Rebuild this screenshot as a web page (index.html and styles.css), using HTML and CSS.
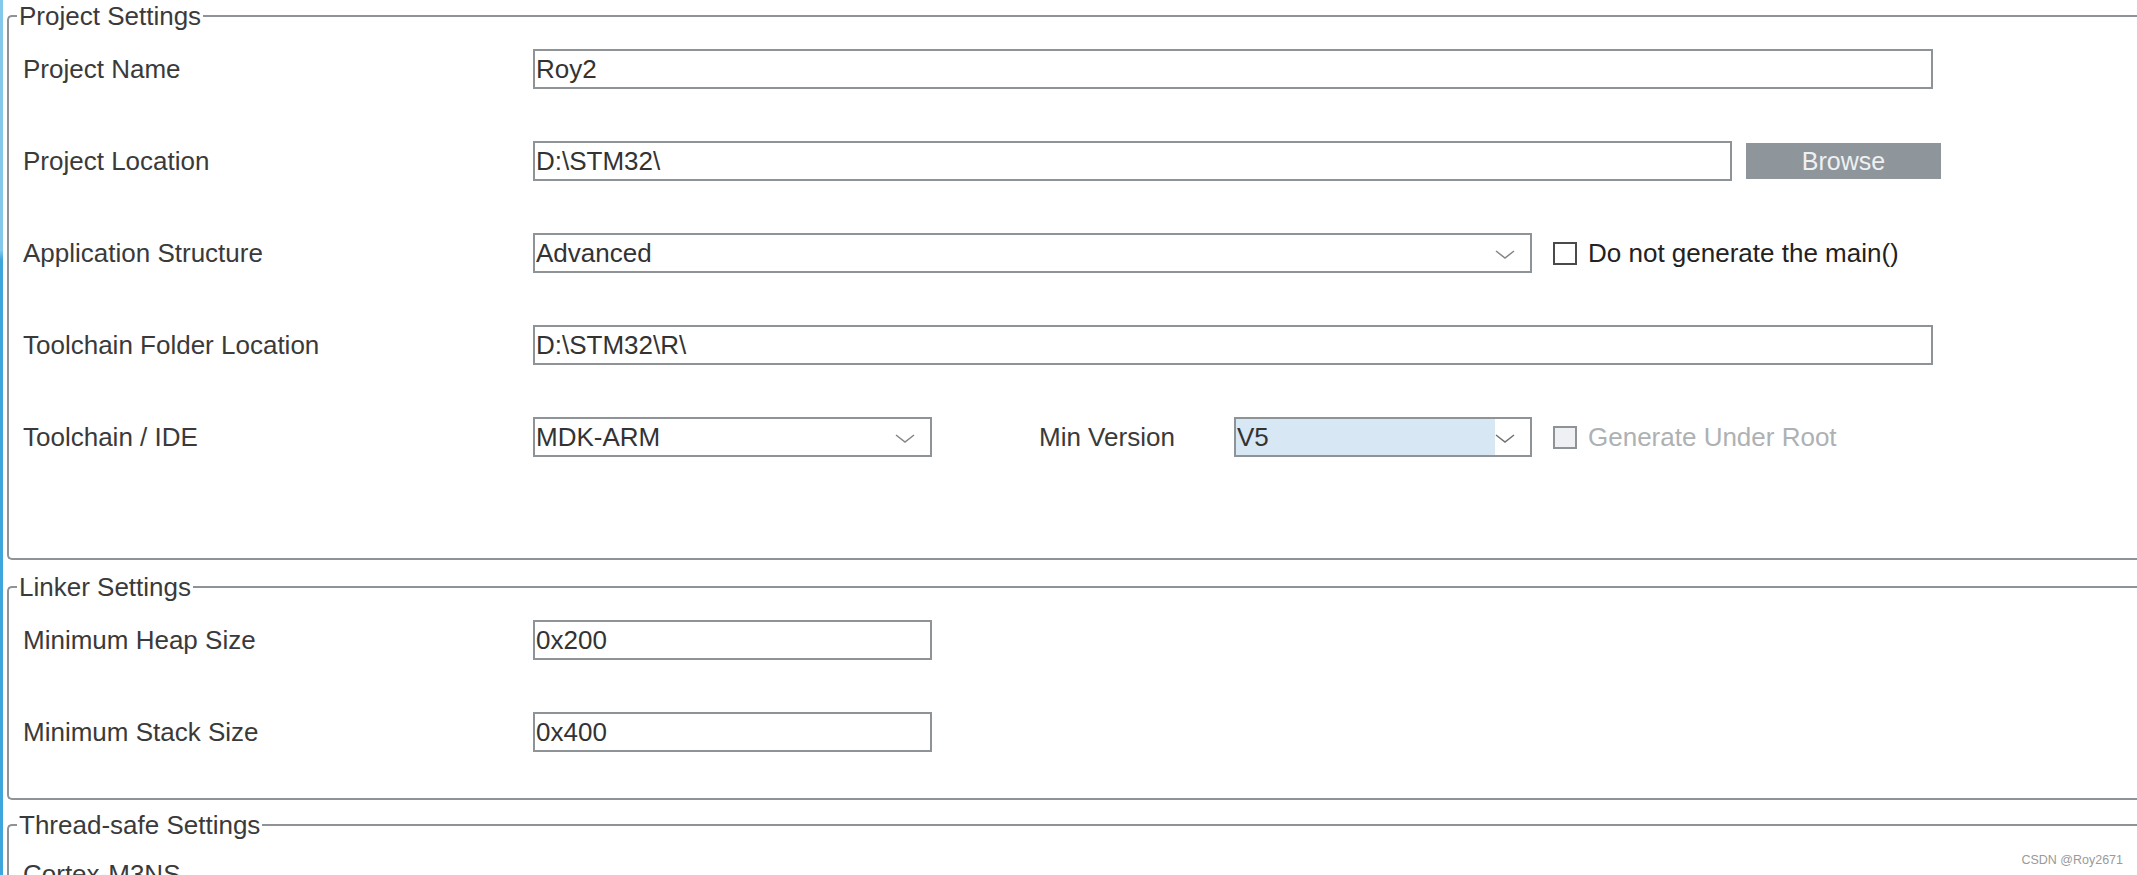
FILE: index.html
```html
<!DOCTYPE html>
<html lang="en">
<head>
<meta charset="utf-8">
<title>Project Settings</title>
<link rel="stylesheet" href="styles.css">
</head>
<body>
<div class="page">
  <div class="strip"></div>
  <div class="content">
    <fieldset class="group group-project">
      <legend>Project Settings</legend>
      <div class="rows">
        <div class="row">
          <div class="label">Project Name</div>
          <div class="field w-full"><span class="val">Roy2</span></div>
        </div>
        <div class="row">
          <div class="label">Project Location</div>
          <div class="field w-loc"><span class="val">D:\STM32\</span></div>
          <div class="button">Browse</div>
        </div>
        <div class="row">
          <div class="label">Application Structure</div>
          <div class="field select w-app"><span class="val">Advanced</span>
            <span class="arrow"><svg width="20" height="9" viewBox="0 0 20 9"><path d="M1 1 L10 8 L19 1" fill="none" stroke="#858585" stroke-width="1.5"/></svg></span>
          </div>
          <div class="check"><span class="box"></span><span class="check-text">Do not generate the main()</span></div>
        </div>
        <div class="row">
          <div class="label">Toolchain Folder Location</div>
          <div class="field w-full"><span class="val">D:\STM32\R\</span></div>
        </div>
        <div class="row">
          <div class="label">Toolchain / IDE</div>
          <div class="field select w-small"><span class="val">MDK-ARM</span>
            <span class="arrow"><svg width="20" height="9" viewBox="0 0 20 9"><path d="M1 1 L10 8 L19 1" fill="none" stroke="#858585" stroke-width="1.5"/></svg></span>
          </div>
          <div class="label label-min">Min Version</div>
          <div class="field select selected w-ver"><span class="val">V5</span>
            <span class="arrow"><svg width="20" height="9" viewBox="0 0 20 9"><path d="M1 1 L10 8 L19 1" fill="none" stroke="#6f6f6f" stroke-width="1.5"/></svg></span>
          </div>
          <div class="check disabled"><span class="box"></span><span class="check-text">Generate Under Root</span></div>
        </div>
      </div>
    </fieldset>

    <fieldset class="group group-linker">
      <legend>Linker Settings</legend>
      <div class="rows">
        <div class="row">
          <div class="label">Minimum Heap Size</div>
          <div class="field w-small"><span class="val">0x200</span></div>
        </div>
        <div class="row">
          <div class="label">Minimum Stack Size</div>
          <div class="field w-small"><span class="val">0x400</span></div>
        </div>
      </div>
    </fieldset>

    <fieldset class="group group-thread">
      <legend>Thread-safe Settings</legend>
      <div class="rows rows-thread">
        <div class="row">
          <div class="label">Cortex-M3NS</div>
        </div>
      </div>
    </fieldset>
  </div>
  <div class="watermark">CSDN @Roy2671</div>
</div>
</body>
</html>
```

FILE: styles.css
```css
html, body {
  margin: 0;
  padding: 0;
  background: #ffffff;
  overflow: hidden;
}

body {
  font-family: "Liberation Sans", Arial, sans-serif;
  font-size: 26px;
  color: #3a3a3a;
}

.page {
  position: relative;
  display: flex;
  width: 2137px;
  height: 875px;
  overflow: hidden;
}

.strip {
  flex: 0 0 3px;
  width: 3px;
  background: linear-gradient(to bottom, #84c9ec 0, #84c9ec 250px, #3ea5dd 260px, #3ea5dd 100%);
}

.content {
  flex: 1 1 auto;
  padding-left: 4px;
  min-width: 0;
}

.group {
  margin: 0;
  padding: 0;
  border: 2px solid #8e9398;
  border-right: none;
  border-radius: 5px 0 0 5px;
  min-width: 0;
}

.group legend {
  margin-left: 8px;
  padding: 0 2px;
  font-size: 26px;
  line-height: 30px;
  color: #3a3a3a;
}

.group-project {
  margin-top: 1px;
}

.group-project .rows {
  padding-bottom: 101px;
}

.group-linker {
  margin-top: 12px;
}

.group-linker .rows {
  padding-bottom: 46px;
}

.group-thread {
  margin-top: 10px;
}

.rows {
  display: flex;
  flex-direction: column;
  gap: 52px;
  padding: 18px 0 0 14px;
}

.rows-thread {
  padding-top: 14px;
  padding-bottom: 40px;
}

.row {
  display: flex;
  align-items: center;
  height: 40px;
}

.label {
  flex: 0 0 510px;
  width: 510px;
  white-space: nowrap;
}

.label-min {
  flex: 0 0 195px;
  width: 195px;
  margin-left: 107px;
}

.field {
  box-sizing: border-box;
  height: 40px;
  border: 2px solid #8e9398;
  background: #ffffff;
  display: flex;
  align-items: center;
  color: #333333;
  white-space: nowrap;
}

.field .val {
  flex: 1 1 auto;
  padding-left: 1px;
  align-self: stretch;
  display: flex;
  align-items: center;
}

.w-full { width: 1400px; }
.w-loc { width: 1199px; }
.w-app { width: 999px; }
.w-small { width: 399px; }
.w-ver { width: 298px; }

.select .arrow {
  flex: 0 0 35px;
  width: 35px;
  display: flex;
  align-items: center;
  justify-content: flex-start;
  align-self: stretch;
  background: #ffffff;
}

.select .arrow svg {
  display: block;
  margin-top: 2px;
}

.selected .val {
  background: #d8e7f4;
}

.button {
  box-sizing: border-box;
  width: 195px;
  height: 36px;
  margin-left: 14px;
  background: #8f969b;
  color: #eef0f2;
  font-size: 25px;
  display: flex;
  align-items: center;
  justify-content: center;
}

.check {
  display: flex;
  align-items: center;
  margin-left: 21px;
  white-space: nowrap;
  color: #222222;
}

.check .box {
  box-sizing: border-box;
  width: 24px;
  height: 23px;
  border: 2px solid #4a4a4a;
  background: #ffffff;
  margin-right: 11px;
}

.check.disabled {
  color: #aeb1b4;
}

.check.disabled .box {
  border-color: #8e9398;
  background: #eef0f3;
}

.watermark {
  position: absolute;
  right: 14px;
  bottom: 8px;
  font-size: 12.5px;
  color: #9a9a9a;
  font-family: "Liberation Sans", Arial, sans-serif;
}
```
